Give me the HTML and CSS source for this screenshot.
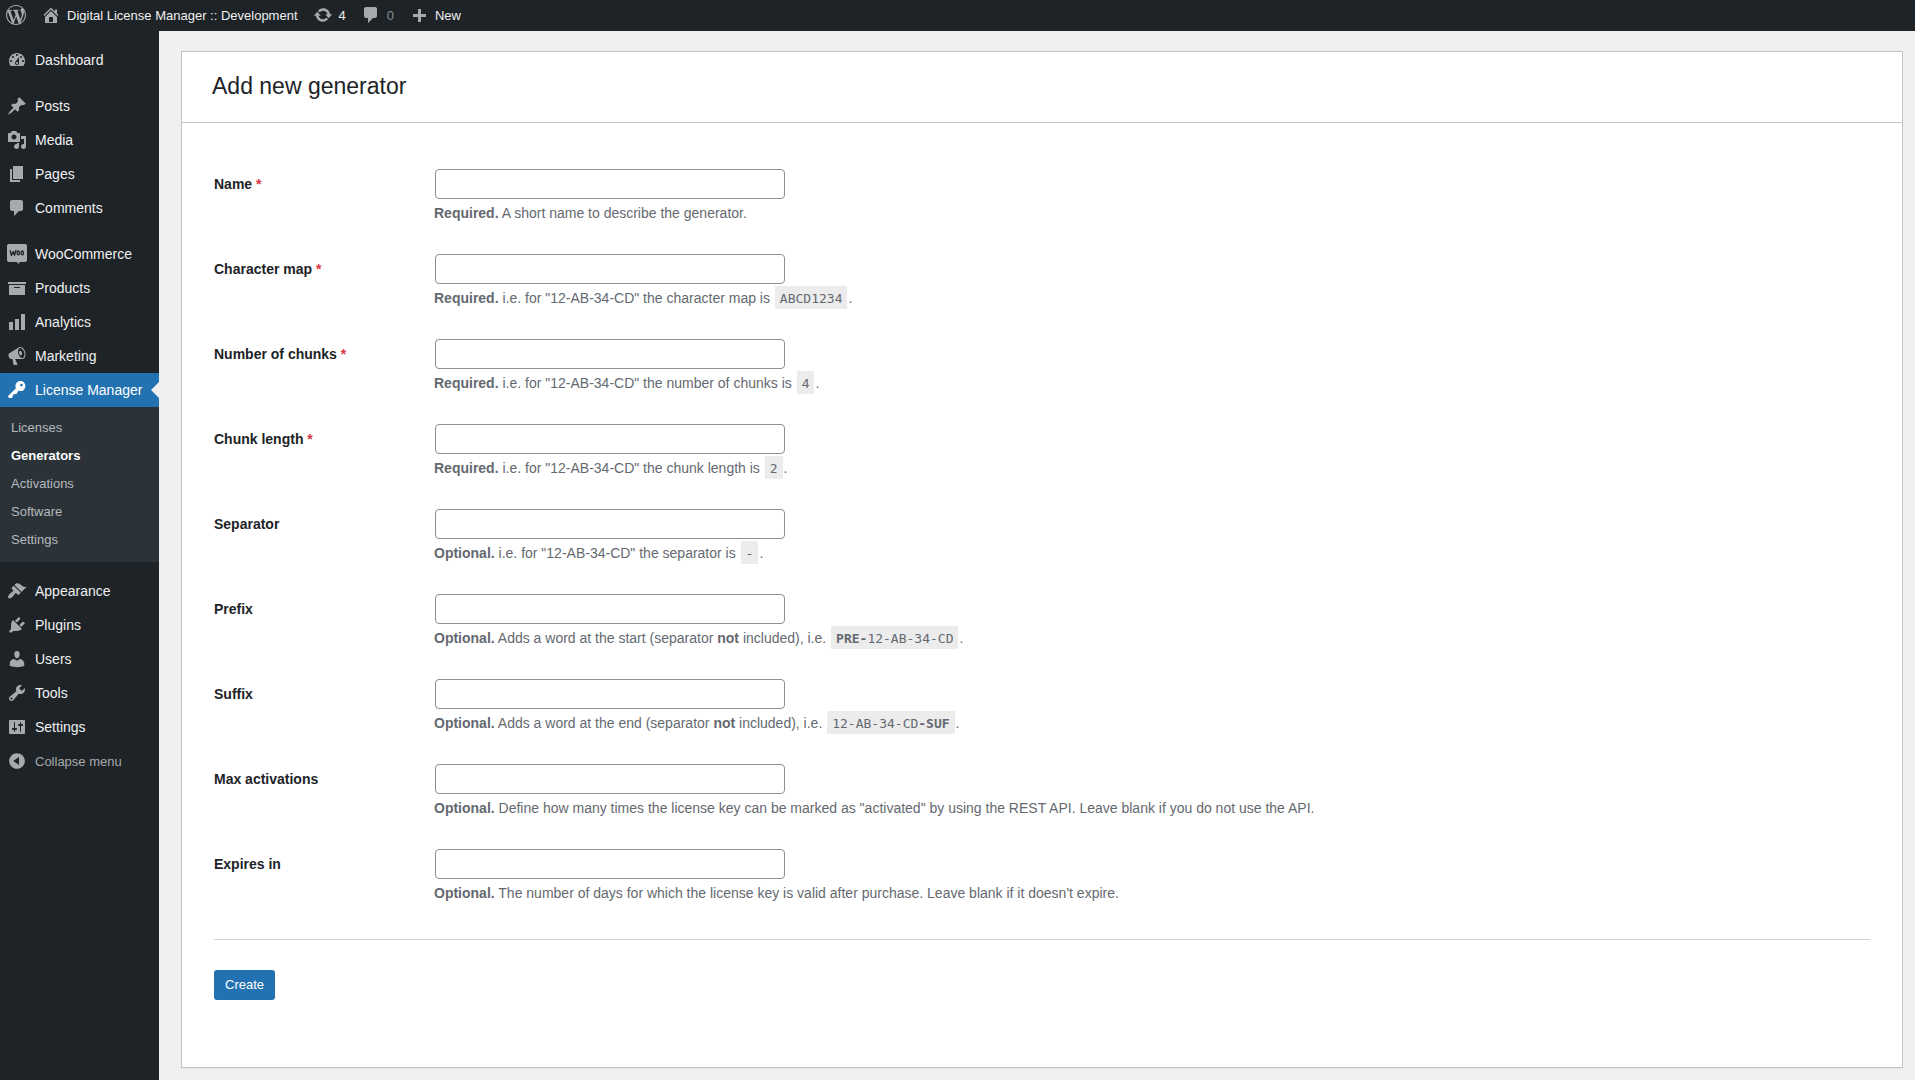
FILE: index.html
```html
<!DOCTYPE html>
<html lang="en">
<head>
    <meta charset="UTF-8">
    <meta name="viewport" content="width=device-width, initial-scale=1.0">
    <title>Add new generator</title>
    <link rel="stylesheet" href="styles.css">
</head>
<body>

    <header class="admin-bar">
        <a href="#wp" aria-label="About WordPress">
            <svg class="icon" viewBox="0 0 20 20"><path d="M20 10c0-5.51-4.49-10-10-10C4.48 0 0 4.49 0 10c0 5.52 4.48 10 10 10 5.51 0 10-4.48 10-10zM7.78 15.37L4.37 6.22c.55-.02 1.17-.08 1.17-.08.5-.06.44-1.13-.06-1.11 0 0-1.45.11-2.37.11-.18 0-.37 0-.58-.01C4.12 2.69 6.87 1.11 10 1.11c2.33 0 4.45.87 6.05 2.34-.68-.11-1.65.39-1.65 1.58 0 .74.45 1.36.9 2.1.35.61.55 1.36.55 2.46 0 1.49-1.4 5-1.4 5l-3.03-8.37c.54-.02.82-.17.82-.17.5-.05.44-1.25-.06-1.22 0 0-1.44.12-2.38.12-.87 0-2.33-.12-2.33-.12-.5-.03-.56 1.2-.06 1.22l.92.08 1.26 3.41zM17.41 10c.24-.64.74-1.87.43-4.25.7 1.29 1.05 2.71 1.05 4.25 0 3.29-1.73 6.24-4.4 7.78.97-2.59 1.94-5.2 2.92-7.78zM6.1 18.09C3.12 16.65 1.11 13.53 1.11 10c0-1.3.23-2.48.72-3.59C3.25 10.3 4.67 14.2 6.1 18.09zm4.03-6.63l2.58 6.98c-.86.29-1.76.45-2.71.45-.79 0-1.57-.11-2.29-.33.81-2.38 1.62-4.74 2.42-7.1z"/></svg>
        </a>
        <a href="#site">
            <svg class="icon" viewBox="0 0 20 20"><path d="M16 8.5l1.53 1.53-1.06 1.06L10 4.6l-6.47 6.49-1.06-1.06L10 2.5l4 4v-2h2v4zm-6-2.46l6 5.99V18H4v-5.97zM12 17v-5H8v5h4z"/></svg>
            Digital License Manager :: Development
        </a>
        <a href="#updates">
            <svg class="icon" viewBox="0 0 20 20"><path d="M10.2 3.28c3.53 0 6.43 2.61 6.92 6h2.08l-3.5 4-3.5-4h2.32c-.45-1.97-2.21-3.45-4.32-3.45-1.45 0-2.73.71-3.54 1.78L4.95 5.66C6.23 4.2 8.11 3.28 10.2 3.28zm-.4 13.44c-3.52 0-6.43-2.61-6.92-6H.8l3.5-4c1.17 1.33 2.33 2.67 3.5 4H5.48c.45 1.97 2.21 3.45 4.32 3.45 1.45 0 2.73-.71 3.54-1.78l1.71 1.95c-1.28 1.46-3.15 2.38-5.25 2.38z"/></svg>
            4
        </a>
        <a href="#comments">
            <svg class="icon" viewBox="0 0 20 20"><path d="M5 2h9c1.1 0 2 .9 2 2v7c0 1.1-.9 2-2 2h-2l-5 5v-5H5c-1.1 0-2-.9-2-2V4c0-1.1.9-2 2-2z"/></svg>
            <span class="count-zero">0</span>
        </a>
        <a href="#new">
            <svg class="icon" viewBox="0 0 20 20"><path d="M17 9v3h-5v5H9v-5H4V9h5V4h3v5h5z"/></svg>
            New
        </a>
    </header>

    <div class="wrap">
        <nav class="admin-menu">
            <ul class="menu-group">
                <li><a href="#dashboard"><svg class="icon" viewBox="0 0 20 20"><path d="M3.76 16h12.48c1.1-1.37 1.76-3.11 1.76-5 0-4.42-3.58-8-8-8s-8 3.58-8 8c0 1.89.66 3.63 1.76 5zM10 4c.55 0 1 .45 1 1s-.45 1-1 1-1-.45-1-1 .45-1 1-1zM6 6c.55 0 1 .45 1 1s-.45 1-1 1-1-.45-1-1 .45-1 1-1zm8 0c.55 0 1 .45 1 1s-.45 1-1 1-1-.45-1-1 .45-1 1-1zm-5.37 5.55L12 7v6c0 1.1-.9 2-2 2s-2-.9-2-2c0-.57.24-1.08.63-1.45zM4 10c.55 0 1 .45 1 1s-.45 1-1 1-1-.45-1-1 .45-1 1-1zm12 0c.55 0 1 .45 1 1s-.45 1-1 1-1-.45-1-1 .45-1 1-1zm-5 3c0-.55-.45-1-1-1s-1 .45-1 1 .45 1 1 1 1-.45 1-1z"/></svg>Dashboard</a></li>
            </ul>

            <ul class="menu-group">
                <li><a href="#posts"><svg class="icon" viewBox="0 0 20 20"><path d="M10.44 3.02l1.82-1.82 6.36 6.35-1.83 1.82c-1.05-.68-2.48-.57-3.41.36l-.75.75c-.92.93-1.04 2.35-.35 3.41l-1.83 1.82-2.41-2.41-2.8 2.79c-.42.42-3.38 2.71-3.8 2.29s1.86-3.39 2.28-3.81l2.79-2.79L4.1 9.36l1.83-1.82c1.05.69 2.48.57 3.4-.36l.75-.75c.93-.92 1.05-2.35.36-3.41z"/></svg>Posts</a></li>
                <li><a href="#media"><svg class="icon" viewBox="0 0 20 20"><path d="M13 11V4c0-.55-.45-1-1-1h-1.67L9 1H5L3.67 3H2c-.55 0-1 .45-1 1v7c0 .55.45 1 1 1h10c.55 0 1-.45 1-1zM7 4.5c1.38 0 2.5 1.12 2.5 2.5S8.38 9.5 7 9.5 4.5 8.38 4.5 7 5.62 4.5 7 4.5zM14 6h5v10.5c0 1.38-1.12 2.5-2.5 2.5S14 17.88 14 16.5s1.12-2.5 2.5-2.5c.17 0 .34.02.5.05V9h-3V6zm-4 8.05V13h2v3.5c0 1.38-1.12 2.5-2.5 2.5S7 17.88 7 16.5 8.12 14 9.5 14c.17 0 .34.02.5.05z"/></svg>Media</a></li>
                <li><a href="#pages"><svg class="icon" viewBox="0 0 20 20"><path d="M6 15V2h10v13H6zm-1 1h8v2H3V5h2v11z"/></svg>Pages</a></li>
                <li><a href="#all-comments"><svg class="icon" viewBox="0 0 20 20"><path d="M5 2h9c1.1 0 2 .9 2 2v7c0 1.1-.9 2-2 2h-2l-5 5v-5H5c-1.1 0-2-.9-2-2V4c0-1.1.9-2 2-2z"/></svg>Comments</a></li>
            </ul>

            <ul class="menu-group">
                <li><a href="#woocommerce"><svg class="icon" viewBox="0 0 20 20"><path d="M2 0h16c1.1 0 2 .9 2 2v14c0 1.1-.9 2-2 2h-5.5l-.5 2-2.5-2H2c-1.1 0-2-.9-2-2V2C0 .9.9 0 2 0z"/><path class="woo-mark" d="M3.2 6.6l1.2 4.800L6.400 7.600l1.100 3.800L9 6.300"/><ellipse class="woo-mark" cx="11.3" cy="8.9" rx="1.200" ry="1.900"/><ellipse class="woo-mark" cx="15.3" cy="8.9" rx="1.200" ry="1.900"/></svg>WooCommerce</a></li>
                <li><a href="#products"><svg class="icon" viewBox="0 0 20 20"><path d="M19 4v2H1V4h18zM2 7h16v10H2V7zm11 3V9H7v1h6z"/></svg>Products</a></li>
                <li><a href="#analytics"><svg class="icon" viewBox="0 0 20 20"><path d="M18 18V2h-4v16h4zm-6 0V7H8v11h4zm-6 0v-8H2v8h4z"/></svg>Analytics</a></li>
                <li><a href="#marketing"><svg class="icon" viewBox="0 0 20 20"><path d="M18.15 5.94c.46 1.62.38 3.22-.02 4.48-.42 1.28-1.26 2.18-2.3 2.48-.16.06-.26.06-.4.06-.06.02-.12.02-.18.02-.06.02-.14.02-.22.02h-6.8l2.22 5.5c.02.14-.06.26-.14.34-.08.1-.24.16-.34.16H6.95c-.1 0-.26-.06-.34-.16-.08-.08-.16-.2-.14-.34l-1-5.5H4.25l-.02-.02c-.5.06-1.08-.18-1.54-.62s-.88-1.08-1.06-1.88c-.24-.8-.2-1.56-.02-2.2.18-.62.58-1.08 1.06-1.3l.02-.02 9-5.4c.1-.06.18-.1.24-.16.06-.04.14-.08.24-.12.16-.08.28-.12.5-.18 1.04-.3 2.24.1 3.22.98s1.84 2.24 2.26 3.86zm-2.58 5.98h-.02c.4-.1.74-.34 1.04-.7.58-.7.86-1.76.86-3.04 0-.64-.1-1.3-.28-1.98-.34-1.36-1.02-2.5-1.78-3.24s-1.68-1.1-2.46-.88c-.82.22-1.4.96-1.7 2-.32 1.04-.28 2.36.06 3.72.38 1.36 1 2.5 1.8 3.24.78.74 1.62 1.1 2.48.88zm-2.54-7.08c.22-.04.42-.02.62.04.38.16.76.48 1.02 1s.42 1.2.42 1.78c0 .3-.04.56-.12.8-.18.48-.44.84-.86.94-.34.1-.8-.06-1.14-.4s-.64-.86-.78-1.5c-.18-.62-.12-1.24.02-1.72s.48-.84.82-.94z"/></svg>Marketing</a></li>
                <li class="current">
                    <a href="#license-manager"><svg class="icon" viewBox="0 0 20 20"><path d="M16.95 2.58c1.96 1.95 1.96 5.12 0 7.07-1.51 1.51-3.75 1.84-5.59 1.01l-1.87 3.31-2.99.31L5 18H2l-1-2 7.95-7.69c-.92-1.87-.62-4.18.93-5.73 1.95-1.96 5.12-1.96 7.07 0zm-2.51 3.79c.74 0 1.33-.6 1.33-1.34 0-.73-.59-1.33-1.33-1.33-.73 0-1.33.6-1.33 1.33 0 .74.6 1.34 1.33 1.34z"/></svg>License Manager</a>
                    <ul class="submenu">
                        <li><a href="#licenses">Licenses</a></li>
                        <li><a href="#generators" class="active" aria-current="page">Generators</a></li>
                        <li><a href="#activations">Activations</a></li>
                        <li><a href="#software">Software</a></li>
                        <li><a href="#license-settings">Settings</a></li>
                    </ul>
                </li>
            </ul>

            <ul class="menu-group">
                <li><a href="#appearance"><svg class="icon" viewBox="0 0 20 20"><path d="M14.48 11.06L7.41 3.99l1.5-1.5c.5-.56 2.3-.47 3.51.32 1.21.8 1.43 1.28 2.91 2.1 1.18.64 2.45 1.26 4.45.85zm-.71.71L6.7 4.7 4.93 6.47c-.39.39-.39 1.02 0 1.41l1.06 1.06c.39.39.39 1.03 0 1.42-.6.6-1.43 1.11-2.21 1.69-.35.26-.7.53-1.01.84C1.43 14.23.4 16.08 1.4 17.07c.99 1 2.84-.03 4.18-1.36.31-.31.58-.66.85-1.02.57-.78 1.08-1.61 1.69-2.21.39-.39 1.02-.39 1.41 0l1.06 1.06c.39.39 1.02.39 1.41 0z"/></svg>Appearance</a></li>
                <li><a href="#plugins"><svg class="icon" viewBox="0 0 20 20"><path d="M13.11 4.36L9.87 7.6 8 5.73l3.24-3.24c.35-.34 1.05-.2 1.56.32.52.51.66 1.21.31 1.55zm-8 1.77l.91-1.12 9.01 9.01-1.19.84c-.71.71-2.63 1.16-3.82 1.16H6.14L4.9 17.26c-.59.59-1.54.59-2.12 0-.59-.58-.59-1.53 0-2.12l1.24-1.24v-3.88c0-1.13.4-3.19 1.09-3.89zm7.26 3.97l3.24-3.24c.34-.35 1.04-.21 1.55.31.52.51.66 1.21.31 1.55l-3.24 3.25z"/></svg>Plugins</a></li>
                <li><a href="#users"><svg class="icon" viewBox="0 0 20 20"><path d="M10 9.25c-2.27 0-2.73-3.44-2.73-3.44C7 4.02 7.82 2 9.97 2c2.16 0 2.98 2.02 2.71 3.81 0 0-.41 3.44-2.68 3.44zm0 2.57L12.72 10c2.39 0 4.52 2.33 4.52 4.53v2.49s-3.65 1.13-7.24 1.13c-3.65 0-7.24-1.13-7.24-1.13v-2.49c0-2.25 1.94-4.48 4.47-4.48z"/></svg>Users</a></li>
                <li><a href="#tools"><svg class="icon" viewBox="0 0 20 20"><path d="M16.68 9.77c-1.34 1.34-3.3 1.67-4.95.99l-5.41 6.52c-.99.99-2.59.99-3.58 0s-.99-2.59 0-3.57l6.52-5.42c-.68-1.65-.35-3.61.99-4.95 1.28-1.28 3.12-1.62 4.72-1.06l-2.89 2.89 2.82 2.82 2.86-2.87c.53 1.58.18 3.39-1.08 4.65zM3.81 16.21c.4.39 1.04.39 1.43 0 .4-.4.4-1.04 0-1.43-.39-.4-1.03-.4-1.43 0-.39.39-.39 1.03 0 1.43z"/></svg>Tools</a></li>
                <li><a href="#settings"><svg class="icon" viewBox="0 0 20 20"><path d="M18 16V4c0-.55-.45-1-1-1H3c-.55 0-1 .45-1 1v12c0 .55.45 1 1 1h14c.55 0 1-.45 1-1zM8 11h1c.55 0 1 .45 1 1s-.45 1-1 1H8v1.5c0 .28-.22.5-.5.5s-.5-.22-.5-.5V13H6c-.55 0-1-.45-1-1s.45-1 1-1h1V5.5c0-.28.22-.5.5-.5s.5.22.5.5V11zm5-2h-1c-.55 0-1-.45-1-1s.45-1 1-1h1V5.5c0-.28.22-.5.5-.5s.5.22.5.5V7h1c.55 0 1 .45 1 1s-.45 1-1 1h-1v5.5c0 .28-.22.5-.5.5s-.5-.22-.5-.5V9z"/></svg>Settings</a></li>
                <li><button type="button" class="collapse"><svg class="icon" viewBox="0 0 20 20"><path d="M10 2.16c4.33 0 7.84 3.51 7.84 7.84s-3.51 7.84-7.84 7.84S2.16 14.33 2.16 10 5.71 2.16 10 2.16zm2 11.72V6.12L6.18 9.97z"/></svg>Collapse menu</button></li>
            </ul>
        </nav>

        <main class="content">
            <div class="card">
                <div class="card-header">
                    <h1>Add new generator</h1>
                </div>

                <form class="card-body">
                    <table class="form-table">
                        <tr>
                            <th scope="row"><label for="name">Name <span class="required">*</span></label></th>
                            <td>
                                <input type="text" id="name" name="name">
                                <p class="description"><b>Required.</b> A short name to describe the generator.</p>
                            </td>
                        </tr>
                        <tr>
                            <th scope="row"><label for="charset">Character map <span class="required">*</span></label></th>
                            <td>
                                <input type="text" id="charset" name="charset">
                                <p class="description"><b>Required.</b> i.e. for "12-AB-34-CD" the character map is <code>ABCD1234</code>.</p>
                            </td>
                        </tr>
                        <tr>
                            <th scope="row"><label for="chunks">Number of chunks <span class="required">*</span></label></th>
                            <td>
                                <input type="text" id="chunks" name="chunks">
                                <p class="description"><b>Required.</b> i.e. for "12-AB-34-CD" the number of chunks is <code>4</code>.</p>
                            </td>
                        </tr>
                        <tr>
                            <th scope="row"><label for="chunk-length">Chunk length <span class="required">*</span></label></th>
                            <td>
                                <input type="text" id="chunk-length" name="chunk_length">
                                <p class="description"><b>Required.</b> i.e. for "12-AB-34-CD" the chunk length is <code>2</code>.</p>
                            </td>
                        </tr>
                        <tr>
                            <th scope="row"><label for="separator">Separator</label></th>
                            <td>
                                <input type="text" id="separator" name="separator">
                                <p class="description"><b>Optional.</b> i.e. for "12-AB-34-CD" the separator is <code>-</code>.</p>
                            </td>
                        </tr>
                        <tr>
                            <th scope="row"><label for="prefix">Prefix</label></th>
                            <td>
                                <input type="text" id="prefix" name="prefix">
                                <p class="description"><b>Optional.</b> Adds a word at the start (separator <b>not</b> included), i.e. <code><b>PRE-</b>12-AB-34-CD</code>.</p>
                            </td>
                        </tr>
                        <tr>
                            <th scope="row"><label for="suffix">Suffix</label></th>
                            <td>
                                <input type="text" id="suffix" name="suffix">
                                <p class="description"><b>Optional.</b> Adds a word at the end (separator <b>not</b> included), i.e. <code>12-AB-34-CD<b>-SUF</b></code>.</p>
                            </td>
                        </tr>
                        <tr>
                            <th scope="row"><label for="max-activations">Max activations</label></th>
                            <td>
                                <input type="text" id="max-activations" name="activations_limit">
                                <p class="description"><b>Optional.</b> Define how many times the license key can be marked as "activated" by using the REST API. Leave blank if you do not use the API.</p>
                            </td>
                        </tr>
                        <tr>
                            <th scope="row"><label for="expires-in">Expires in</label></th>
                            <td>
                                <input type="text" id="expires-in" name="expires_in">
                                <p class="description"><b>Optional.</b> The number of days for which the license key is valid after purchase. Leave blank if it doesn't expire.</p>
                            </td>
                        </tr>
                    </table>

                    <div class="submit">
                        <button type="submit" class="button-primary">Create</button>
                    </div>
                </form>
            </div>
        </main>
    </div>

</body>
</html>
```
FILE: styles.css
```css
* {
    box-sizing: border-box;
}
body {
    display: flex;
    flex-direction: column;
    min-height: 100vh;
    margin: 0;
    background-color: #f0f0f1;
    color: #1d2327;
    font-family: "Liberation Sans", Arial, sans-serif;
    font-size: 14px;
}
a {
    text-decoration: none;
}
ul {
    list-style: none;
    margin: 0;
    padding: 0;
}
.icon {
    flex: none;
    width: 20px;
    height: 20px;
    fill: #a7aaad;
}
.woo-mark {
    fill: none;
    stroke: #1d2327;
    stroke-width: 1.3;
    stroke-linecap: round;
    stroke-linejoin: round;
}

/* Top bar */
.admin-bar {
    display: flex;
    gap: 15px;
    height: 31px;
    padding: 0 6px 1px;
    background-color: #1d2327;
}
.admin-bar a {
    display: flex;
    align-items: center;
    gap: 6px;
    color: #f0f0f1;
    font-size: 13px;
}
.count-zero {
    opacity: 0.5;
}

/* Side menu */
.wrap {
    display: flex;
    flex: 1;
}
.admin-menu {
    flex: none;
    width: 159px;
    padding-top: 12px;
    background-color: #1d2327;
}
.menu-group {
    margin-bottom: 12px;
}
.menu-group a, .collapse {
    display: flex;
    align-items: center;
    gap: 8px;
    height: 34px;
    padding: 0 7px;
    color: #f0f0f1;
    white-space: nowrap;
}
.collapse {
    border: none;
    background: none;
    color: #a7aaad;
    font-family: inherit;
    font-size: 13px;
    cursor: pointer;
}
.current > a {
    position: relative;
    background-color: #2271b1;
    color: #fff;
}
.current > a::after {
    content: "";
    position: absolute;
    top: 9px;
    right: 0;
    border: 8px solid transparent;
    border-left: none;
    border-right-color: #f0f0f1;
}
.current .icon {
    fill: #fff;
}
.submenu {
    padding: 6px 0 9px;
    background-color: #2c3338;
}
.submenu a {
    height: 28px;
    padding: 0 11px;
    color: #b4b9be;
    font-size: 13px;
}
.submenu .active {
    color: #fff;
    font-weight: bold;
}

/* Page */
.content {
    flex: 1;
    display: flex;
    padding: 20px 12px 12px 22px;
}
.card {
    flex: 1;
    border: 1px solid #c3c4c7;
    background-color: #fff;
    box-shadow: 0 1px 1px rgba(0, 0, 0, 0.04);
}
.card-header {
    padding: 19px 30px 21px;
    border-bottom: 1px solid #c3c4c7;
}
.card-header h1 {
    margin: 0;
    font-size: 23px;
    font-weight: normal;
    line-height: 30px;
}
.card-body {
    padding: 31px 32px;
}
.form-table {
    width: 100%;
    border-collapse: collapse;
}
.form-table th {
    width: 210px;
    padding: 20px 10px 20px 0;
    line-height: 20px;
    text-align: left;
    vertical-align: top;
}
.form-table td {
    padding: 15px 10px;
    vertical-align: top;
}
.form-table input {
    display: block;
    width: 350px;
    max-width: 100%;
    height: 30px;
    margin: 0 1px;
    padding: 0 8px;
    border: 1px solid #8c8f94;
    border-radius: 4px;
    background-color: #fff;
    color: #2c3338;
    font-family: inherit;
    font-size: 14px;
}
.required {
    color: #dc3545;
}
.description {
    margin: 4px 0 0;
    color: #646970;
    line-height: 21px;
}
.description code {
    margin: 0 1px;
    padding: 5px 5px 3px;
    background-color: #ececed;
    font-family: "DejaVu Sans Mono", monospace;
    font-size: 13px;
    line-height: 15px;
}
.submit {
    margin-top: 20px;
    padding-top: 30px;
    border-top: 1px solid #d0d1d3;
}
.button-primary {
    display: block;
    height: 30px;
    padding: 0 11px 1px;
    border: none;
    border-radius: 3px;
    background-color: #2271b1;
    color: #fff;
    font-family: inherit;
    font-size: 13px;
    cursor: pointer;
}
.button-primary:hover {
    background-color: #135e96;
}
```
